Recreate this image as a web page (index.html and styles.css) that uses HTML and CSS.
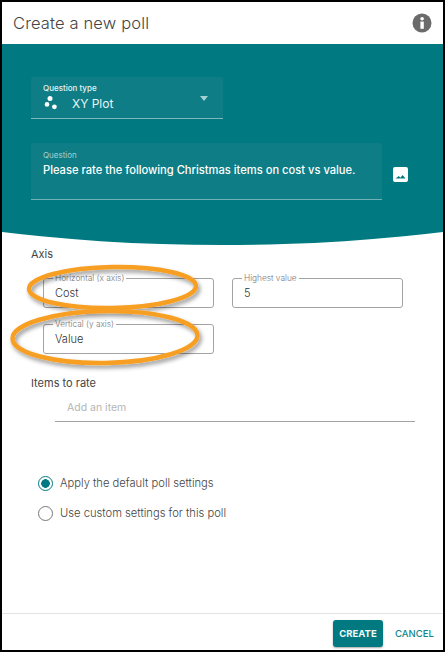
FILE: index.html
```html
<!DOCTYPE html>
<html lang="en">
<head>
<meta charset="utf-8">
<title>Create a new poll</title>
<link rel="stylesheet" href="styles.css">
</head>
<body>
<div class="dialog">
  <header class="head">
    <h1 class="title">Create a new poll</h1>
    <svg class="info" viewBox="0 0 20 20" width="20" height="20"><circle cx="10" cy="10" r="9.500" fill="#6b6b6b"/><rect x="8.400" y="8.600" width="3.400" height="7.200" fill="#fff"/><circle cx="10.100" cy="5.700" r="1.800" fill="#fff"/></svg>
  </header>
  <section class="band">
    <div class="type">
      <div class="type-label">Question type</div>
      <div class="type-row">
        <svg class="dots" viewBox="0 0 14 14" width="14" height="14"><circle cx="6" cy="2.600" r="2.500" fill="#fff"/><circle cx="3" cy="8.400" r="2.300" fill="#fff"/><circle cx="10.400" cy="10.800" r="2.400" fill="#fff"/></svg>
        <span class="type-value">XY Plot</span>
        <span class="caret"></span>
      </div>
    </div>
    <div class="question-row">
      <div class="question">
        <div class="question-label">Question</div>
        <div class="question-text">Please rate the following Christmas items on cost vs value.</div>
      </div>
      <svg class="image-icon" viewBox="0 0 15 15" width="15" height="15"><path fill="#fff" fill-rule="evenodd" d="M2 0h11a2 2 0 0 1 2 2v11a2 2 0 0 1-2 2H2a2 2 0 0 1-2-2V2a2 2 0 0 1 2-2zM2.500 11.500h10L9.600 8l-2.200 2.700L5.800 9z"/></svg>
    </div>
  </section>
  <main class="body">
    <div class="section-label">Axis</div>
    <div class="axis-grid">
      <fieldset class="field"><legend>Horizontal (x axis)</legend><span>Cost</span></fieldset>
      <fieldset class="field"><legend>Highest value</legend><span>5</span></fieldset>
      <fieldset class="field"><legend>Vertical (y axis)</legend><span>Value</span></fieldset>
    </div>
    <div class="section-label items-label">Items to rate</div>
    <div class="add-item">Add an item</div>
    <div class="radios">
      <div class="radio-row"><span class="radio on"></span><span>Apply the default poll settings</span></div>
      <div class="radio-row"><span class="radio"></span><span>Use custom settings for this poll</span></div>
    </div>
  </main>
  <footer class="foot">
    <button class="create">CREATE</button>
    <button class="cancel">CANCEL</button>
  </footer>
  <svg class="marks" viewBox="0 0 441 648" width="441" height="648">
    <defs><filter id="sh" x="-10%" y="-30%" width="120%" height="160%"><feDropShadow dx="2" dy="3" stdDeviation="2" flood-color="#000" flood-opacity=".4"/></filter></defs>
    <g fill="none" stroke="#f79f24" stroke-width="4.500" filter="url(#sh)">
      <ellipse cx="110.500" cy="285.500" rx="83.500" ry="20.500" transform="rotate(-1 110 285)"/>
      <ellipse cx="103" cy="335" rx="92.500" ry="26" transform="rotate(-1 103 335)"/>
    </g>
  </svg>
</div>
</body>
</html>
```
FILE: styles.css
```css
* { box-sizing: border-box; }
html, body { margin: 0; padding: 0; }
body { width: 445px; height: 652px; background: #fff; font-family: Inter, "Liberation Sans", sans-serif; color: #444; overflow: hidden; }
.dialog { position: relative; width: 445px; height: 652px; border: 2px solid #000; display: flex; flex-direction: column; background: #fff; }
.head { height: 42px; flex: none; display: flex; align-items: center; justify-content: space-between; padding: 0 11px; }
.title { margin: 0; font-size: 16.500px; font-weight: 300; letter-spacing: .15px; color: #444; }
.info { display: block; }
.band { flex: none; height: 201px; background: #007a80; padding: 33px 29px 0; clip-path: ellipse(625px 201px at 50% 0); color: #fff; }
.type { width: 192px; height: 42px; background: #0e7d85; border-bottom: 1px solid #7db9bc; border-radius: 3px 3px 0 0; padding: 6px 12px 0; }
.type-label { font-size: 8px; line-height: 10px; font-weight: 500; color: #e4f2f2; }
.type-row { display: flex; align-items: center; margin-top: 1px; height: 18px; }
.dots { display: block; margin-left: 1px; }
.type-value { margin-left: 14px; font-size: 12px; color: #e8f4f4; }
.caret { margin-left: auto; margin-right: 3px; margin-top: -9px; border-left: 4.500px solid transparent; border-right: 4.500px solid transparent; border-top: 5px solid #a5d0d2; }
.question-row { display: flex; align-items: flex-start; margin-top: 24px; }
.question { width: 351px; height: 57px; background: #0e7d85; border-bottom: 1px solid #6fb1b5; border-radius: 3px 3px 0 0; padding: 7px 12px 0; }
.question-label { font-size: 8px; line-height: 10px; color: #a5d0d2; }
.question-text { margin-top: 2px; font-size: 11.150px; line-height: 16px; font-weight: 500; color: #fff; white-space: nowrap; }
.image-icon { display: block; margin: 24px 0 0 11px; }
.body { flex: 1; padding: 2px 0 0 29px; }
.section-label { font-size: 11px; line-height: 14px; color: #444; }
.axis-grid { display: grid; grid-template-columns: 171px 171px; column-gap: 18px; row-gap: 12px; margin: 13px 0 0 12px; }
.field { margin: 0; padding: 0 11px; height: 34px; min-width: 0; border: 1px solid #a3a3a3; border-radius: 3px; font-size: 11px; font-weight: 300; color: #333; display: block; }
.field legend { padding: 0 2px; margin-left: -2px; font-size: 8.300px; line-height: 9px; color: #777; }
.field span { display: block; line-height: 14px; margin-top: 3px; }
.items-label { margin-top: 22px; }
.add-item { margin: 11px 0 0 24px; width: 360px; height: 21px; border-bottom: 1px solid #a3a3a3; padding-left: 12px; font-size: 10.500px; line-height: 14px; color: #b5b5b5; }
.radios { margin: 54px 0 0 7px; display: flex; flex-direction: column; row-gap: 15px; }
.radio-row { display: flex; align-items: center; column-gap: 7px; font-size: 11.200px; font-weight: 300; line-height: 15px; color: #444; height: 15px; }
.radio { width: 15px; height: 15px; flex: none; border: 1.500px solid #777; border-radius: 50%; background: #fff; }
.radio.on { border-color: #007a80; background: radial-gradient(circle, #007a80 0 4px, #fff 4.600px); }
.foot { flex: none; height: 37px; border-top: 1px solid #e3e3e3; display: flex; align-items: flex-start; padding: 6px 0 0 331px; column-gap: 12px; }
.create { width: 50px; height: 27px; padding: 0; border: 0; border-radius: 3px; background: #007a80; color: #f0f8f8; font: 700 9.500px Inter, "Liberation Sans", sans-serif; box-shadow: 0 1px 2px rgba(0,0,0,.35); }
.cancel { padding: 0; border: 0; height: 27px; background: none; color: #12858a; font: 500 9.500px Inter, "Liberation Sans", sans-serif; }
.marks { position: absolute; left: 0; top: 0; pointer-events: none; }
```
